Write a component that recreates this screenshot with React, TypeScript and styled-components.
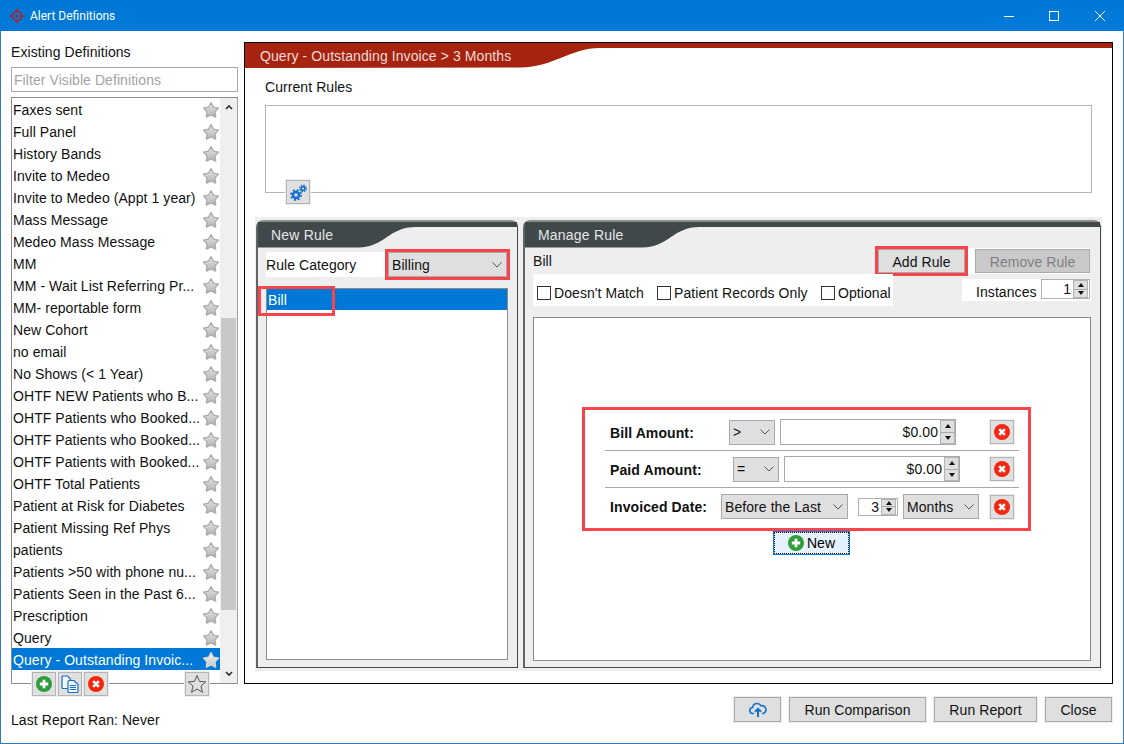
import React, { useId } from 'react'
import styled, { createGlobalStyle } from 'styled-components'

const definitions = [
  'Faxes sent',
  'Full Panel',
  'History Bands',
  'Invite to Medeo',
  'Invite to Medeo (Appt 1 year)',
  'Mass Message',
  'Medeo Mass Message',
  'MM',
  'MM - Wait List Referring Pr...',
  'MM- reportable form',
  'New Cohort',
  'no email',
  'No Shows (< 1 Year)',
  'OHTF NEW Patients who B...',
  'OHTF Patients who Booked...',
  'OHTF Patients who Booked...',
  'OHTF Patients with Booked...',
  'OHTF Total Patients',
  'Patient at Risk for Diabetes',
  'Patient Missing Ref Phys',
  'patients',
  'Patients >50 with phone nu...',
  'Patients Seen in the Past 6...',
  'Prescription',
  'Query',
  'Query - Outstanding Invoic...',
]

const GlobalStyle = createGlobalStyle`
  * { box-sizing: border-box; }
  html, body { margin: 0; padding: 0; overflow: hidden; background: #fff; }
  body { font-family: "Liberation Sans", Arial, sans-serif; font-size: 14px; color: #111; letter-spacing: 0.07px; }
`

const Window = styled.div`
  width: 1124px;
  height: 744px;
  display: flex;
  flex-direction: column;
  border: 1px solid #2b7cc4;
  border-top: 0;
  background: #fff;
`

const TitleBar = styled.header`
  height: 31px;
  margin: 0 -1px;
  flex: none;
  display: flex;
  align-items: center;
  padding-left: 9px;
  background: #0078d7;
  color: #fff;
  font-family: Roboto, sans-serif;
  font-size: 12px;
  letter-spacing: 0;
`

const TitleText = styled.span`
  margin-left: 5px;
  flex: 1;
`

const WinButton = styled.span<{ $w: number }>`
  width: ${p => p.$w}px;
  height: 31px;
  display: flex;
  align-items: center;
  justify-content: center;
`

const Content = styled.div`
  flex: 1;
  display: flex;
  gap: 6px;
  padding: 11px 0 0 10px;
`

const LeftColumn = styled.aside`
  width: 227px;
  display: flex;
  flex-direction: column;
`

const Heading = styled.div`
  margin-top: 2px;
  line-height: 16px;
`

const FilterInput = styled.input`
  margin-top: 7px;
  height: 25px;
  width: 100%;
  border: 1px solid #a9a9a9;
  padding: 0 2px;
  font: inherit;
  letter-spacing: inherit;
  outline: none;
  &::placeholder { color: #a3a3a3; opacity: 1; }
`

const ListBox = styled.div`
  margin-top: 5px;
  height: 587px;
  display: flex;
  border: 1px solid #8c8c8c;
  border-right-color: #a0a0a0;
`

const DefinitionList = styled.ul`
  flex: 1;
  margin: 0;
  padding: 0;
  list-style: none;
`

const DefinitionRow = styled.li<{ $selected?: boolean }>`
  height: 22px;
  display: flex;
  align-items: center;
  justify-content: space-between;
  padding: 2px 0 0 1px;
  white-space: nowrap;
  background: ${p => (p.$selected ? '#0078d7' : 'transparent')};
  color: ${p => (p.$selected ? '#fff' : '#111')};
`

const StarSlot = styled.span`
  width: 18px;
  height: 18px;
  display: flex;
`

const ScrollBar = styled.div`
  width: 17px;
  display: flex;
  flex-direction: column;
  align-items: center;
  background: #efefef;
`

const ScrollArrow = styled.span<{ $bottom?: boolean }>`
  height: 18px;
  display: flex;
  align-items: center;
  margin-top: ${p => (p.$bottom ? 'auto' : '0')};
`

const ScrollThumb = styled.div`
  width: 15px;
  height: 292px;
  margin-top: 202px;
  background: #c8c8c8;
`

const ListTools = styled.div`
  position: relative;
  margin-top: -12px;
  padding: 0 29px 0 21px;
  display: flex;
  gap: 2px;
`

const IconButton = styled.button<{ $push?: boolean }>`
  width: 24px;
  height: 24px;
  padding: 0;
  display: flex;
  align-items: center;
  justify-content: center;
  background: #e0e0e0;
  border: 1px solid #b4b4b4;
  box-shadow: 0 0 0 1px #eee;
  margin-left: ${p => (p.$push ? 'auto' : '0')};
`

const LastReport = styled.div`
  margin-top: 16px;
  line-height: 16px;
`

const RightColumn = styled.div`
  width: 869px;
  display: flex;
  flex-direction: column;
`

const MainPanel = styled.main`
  height: 642px;
  border: 1px solid #000;
`

const Banner = styled.div`
  position: relative;
  height: 25px;
  padding: 5px 0 0 15px;
  line-height: 16px;
  color: #f0dcd7;
  letter-spacing: 0.09px;
`

const ShapeBack = styled.svg`
  position: absolute;
  left: 0;
  top: 0;
`

const BannerText = styled.span`
  position: relative;
`

const CurrentLabel = styled.div`
  margin: 11px 0 0 20px;
  line-height: 16px;
`

const RulesBox = styled.div`
  position: relative;
  margin: 10px 0 0 20px;
  width: 827px;
  height: 88px;
  border: 1px solid #b4b4b4;
`

const GearButton = styled(IconButton)`
  position: absolute;
  left: 20px;
  bottom: -12px;
`

const PanelsArea = styled.div`
  margin: 24px 0 0 10px;
  width: 847px;
  height: 454px;
  padding: 3px 0 0 1px;
  display: flex;
  gap: 5px;
  background: #eee;
`

const RulePanel = styled.section<{ $w: number }>`
  width: ${p => p.$w}px;
  height: 448px;
  background: #eee;
  border-style: solid;
  border-width: 2px 1px 1px 2px;
  border-color: #8e8e8e #41484a #41484a #5f6567;
  border-radius: 7px 7px 0 0;
`

const PanelHeader = styled.div`
  position: relative;
  height: 26px;
  padding: 5px 0 0 13px;
  line-height: 16px;
  color: #e4e7e7;
  letter-spacing: 0.2px;
`

const RuleCategoryRow = styled.div`
  margin: 4px 0 0 8px;
  width: 243px;
  height: 25px;
  display: flex;
  align-items: center;
  background: #fff;
`

const Dropdown = styled.div<{ $w: number; $marked?: boolean }>`
  width: ${p => p.$w}px;
  height: 25px;
  flex: none;
  display: flex;
  align-items: center;
  justify-content: space-between;
  padding: 0 4px 0 3px;
  background: #dfdfdf;
  border: 1px solid #a9a9a9;
  ${p => p.$marked && 'outline: 3px solid #f8444a; margin: 0 2px 0 auto;'}
`

const RuleTypeList = styled.div`
  margin: 11px 0 0 8px;
  width: 242px;
  height: 372px;
  background: #fff;
  border: 1px solid #8c8c8c;
`

const RuleTypeRow = styled.div`
  position: relative;
  height: 21px;
  padding: 2px 0 0 1px;
  line-height: 18px;
  background: #0078d7;
  color: #fff;
  &::after {
    content: '';
    box-sizing: border-box;
    position: absolute;
    left: -9px;
    top: -3px;
    width: 77px;
    height: 30px;
    border: 3px solid #f8444a;
  }
`

const ManageTop = styled.div`
  height: 26px;
  display: flex;
  align-items: center;
  padding: 0 10px 0 8px;
`

const ManageButtons = styled.div`
  margin-left: auto;
  display: flex;
  gap: 10px;
  height: 26px;
  padding: 1px 0;
  background: #fff;
`

const ActionButton = styled.button<{ $w: number; $marked?: boolean; $off?: boolean }>`
  width: ${p => p.$w}px;
  height: 24px;
  padding: 1px 0 0;
  flex: none;
  font: inherit;
  letter-spacing: inherit;
  background: ${p => (p.$off ? '#c9c9c9' : '#dfdfdf')};
  color: ${p => (p.$off ? '#7f7f7f' : '#111')};
  border: 1px solid #aaa;
  ${p => p.$marked && 'outline: 3px solid #f8444a;'}
`

const OptionsBar = styled.div`
  height: 32px;
  display: flex;
  justify-content: space-between;
  padding: 0 9px 0 8px;
`

const Options = styled.div`
  width: 360px;
  display: flex;
  align-items: center;
  padding: 6px 0 0 4px;
  background: #fff;
`

const Option = styled.label<{ $w: number }>`
  width: ${p => p.$w}px;
  display: flex;
  align-items: center;
  gap: 3px;
  white-space: nowrap;
`

const CheckMark = styled.span`
  width: 14px;
  height: 14px;
  flex: none;
  background: #fff;
  border: 1px solid #333;
`

const Instances = styled.div`
  width: 129px;
  height: 22px;
  margin-top: 5px;
  display: flex;
  justify-content: space-between;
  padding: 0 1px 0 14px;
  line-height: 26px;
  background: #fff;
`

const RuleCanvas = styled.div`
  margin: 11px 0 0 8px;
  width: 558px;
  height: 344px;
  padding: 89px 0 0 48px;
  background: #fff;
  border: 1px solid #8a8a8a;
`

const ConditionBox = styled.div`
  width: 449px;
  height: 124px;
  border: 3px solid #f8444a;
  padding: 0 9px 0 20px;
`

const ConditionRow = styled.div<{ $h: number; $pt?: number; $pb?: number; $last?: boolean }>`
  height: ${p => p.$h}px;
  padding: ${p => p.$pt ?? 0}px 5px ${p => p.$pb ?? 0}px;
  display: flex;
  align-items: center;
  gap: 5px;
  border-bottom: ${p => (p.$last ? '0' : '1px solid #a9a9a9')};
`

const ConditionLabel = styled.span<{ $w: number; $nudge?: boolean }>`
  width: ${p => p.$w}px;
  padding-top: ${p => (p.$nudge ? '2px' : '0')};
  font-weight: bold;
  white-space: nowrap;
  letter-spacing: 0.1px;
`

const AmountField = styled.div`
  width: 176px;
  height: 26px;
  display: flex;
  align-items: center;
  justify-content: flex-end;
  gap: 2px;
  border: 1px solid #a9a9a9;
`

const NumberField = styled.div<{ $w: number; $h: number; $ml?: number }>`
  width: ${p => p.$w}px;
  height: ${p => p.$h}px;
  margin-left: ${p => p.$ml ?? 0}px;
  flex: none;
  display: flex;
  align-items: center;
  justify-content: flex-end;
  gap: 2px;
  padding-right: 1px;
  line-height: 16px;
  background: #fff;
  border: 1px solid #b0b0b0;
`

const Spin = styled.span<{ $h: number }>`
  width: 15px;
  height: ${p => p.$h}px;
  display: flex;
  flex-direction: column;
  flex: none;
  background: #dfdfdf;
  border: 1px solid #b4b4b4;
`

const SpinCell = styled.span<{ $down?: boolean }>`
  flex: 1;
  display: flex;
  align-items: center;
  justify-content: center;
  border-top: ${p => (p.$down ? '1px solid #a9a9a9' : '0')};
  &::before {
    content: '';
    border-left: 3px solid transparent;
    border-right: 3px solid transparent;
    ${p => (p.$down ? 'border-top: 4px solid #111;' : 'border-bottom: 4px solid #111;')}
  }
`

const RemoveButton = styled(IconButton)`
  margin-left: auto;
`

const NewButton = styled.button`
  margin-left: 191px;
  width: 77px;
  height: 24px;
  padding: 0;
  display: flex;
  align-items: center;
  justify-content: center;
  gap: 3px;
  font: inherit;
  background: #e5f1fb;
  border: 1px solid #0078d7;
  outline: 1px dotted #111;
  outline-offset: -2px;
`

const Footer = styled.footer`
  margin-top: 13px;
  display: flex;
  justify-content: flex-end;
  gap: 8px;
  padding-right: 1px;
`

const FooterButton = styled.button<{ $w: number }>`
  width: ${p => p.$w}px;
  height: 25px;
  padding: 0;
  display: flex;
  align-items: center;
  justify-content: center;
  font: inherit;
  letter-spacing: inherit;
  color: #111;
  background: #dfdfdf;
  border: 1px solid #a9a9a9;
  box-shadow: 0 0 0 1px #eee;
`

function Star({ bright, size = 18 }: { bright?: boolean; size?: number }) {
  const id = useId()
  return (
    <svg width={size} height={size} viewBox="0 0 18 18">
      <defs>
        <linearGradient id={id} x1="0" y1="0" x2="0" y2="1">
          <stop offset="0" stopColor={bright ? '#f4f4f4' : '#e6e6e6'} />
          <stop offset="1" stopColor={bright ? '#c4c4c4' : '#b4b4b4'} />
        </linearGradient>
      </defs>
      <polygon
        points="9,1.6 11.47,6.2 16.6,7.13 13,10.9 13.7,16.07 9,13.8 4.3,16.07 5,10.9 1.4,7.13 6.53,6.2"
        fill={`url(#${id})`}
        stroke={bright ? '#d8d8d8' : '#ababab'}
        strokeWidth="1.300"
        strokeLinejoin="round"
      />
    </svg>
  )
}

function OutlineStar() {
  return (
    <svg width="20" height="20" viewBox="0 0 20 20">
      <polygon
        points="10,1.5 12.5,7.4 18.8,7.9 14,12 15.5,18.3 10,15 4.5,18.3 6,12 1.2,7.9 7.5,7.4"
        fill="none"
        stroke="#555"
        strokeWidth="1"
        strokeLinejoin="round"
      />
    </svg>
  )
}

function AddIcon({ size = 16 }: { size?: number }) {
  return (
    <svg width={size} height={size} viewBox="0 0 16 16">
      <circle cx="8" cy="8" r="8" fill="#2f9e38" />
      <path d="M8 3.800v8.400M3.800 8h8.400" stroke="#fff" strokeWidth="2.800" />
    </svg>
  )
}

function DeleteIcon() {
  return (
    <svg width="16" height="16" viewBox="0 0 16 16">
      <circle cx="8" cy="8" r="8" fill="#f5260f" />
      <path d="M5.200 5.200l5.600 5.600M10.800 5.200l-5.600 5.600" stroke="#fff" strokeWidth="2.600" />
    </svg>
  )
}

function CopyIcon() {
  return (
    <svg width="18" height="18" viewBox="0 0 18 18" fill="#f2f7fd" stroke="#1470c8" strokeWidth="1.200">
      <path d="M2 1h4.500l3 3v9.500H2a1 1 0 0 1-1-1V2a1 1 0 0 1 1-1z" />
      <path d="M8 5.500h5l4 4v7a1 1 0 0 1-1 1H8a1 1 0 0 1-1-1v-10a1 1 0 0 1 1-1z" />
      <path d="M9 10.500h6M9 12.500h6M9 14.500h6" fill="none" />
    </svg>
  )
}

function GearsIcon() {
  return (
    <svg width="17" height="17" viewBox="0 0 17 17" fill="none" stroke="#1470c8">
      <circle cx="6" cy="11" r="3" strokeWidth="2.400" />
      <circle cx="6" cy="11" r="5" strokeWidth="1.800" strokeDasharray="2 1.930" />
      <circle cx="13" cy="4.500" r="1.900" strokeWidth="1.700" />
      <circle cx="13" cy="4.500" r="3.300" strokeWidth="1.300" strokeDasharray="1.500 1.090" />
    </svg>
  )
}

function CloudIcon() {
  return (
    <svg width="18" height="16" viewBox="0 0 18 16" fill="none" stroke="#1470c8" strokeWidth="1.600">
      <path d="M5 11.500H4a3 3 0 0 1-.4-6A4.500 4.500 0 0 1 12 3.800a3.900 3.900 0 0 1 2 7.700h-1" />
      <path d="M9 15V7.500M6 9.800l3-3 3 3" strokeWidth="2" />
    </svg>
  )
}

function Chevron() {
  return (
    <svg width="10" height="6" viewBox="0 0 10 6" fill="none" stroke="#555" strokeWidth="1">
      <path d="M0.500 0.500L5 5l4.500-4.500" />
    </svg>
  )
}

function ScrollChevron({ up }: { up?: boolean }) {
  return (
    <svg width="8" height="6" viewBox="0 0 8 6" fill="none" stroke="#333" strokeWidth="1.700">
      <path d={up ? 'M1 5l3-3 3 3' : 'M1 1l3 3 3-3'} />
    </svg>
  )
}

function AppLogo() {
  return (
    <svg width="16" height="16" viewBox="0 0 16 16">
      <circle cx="8" cy="8" r="4.600" fill="none" stroke="#b5202b" strokeWidth="1.700" />
      <circle cx="8" cy="8" r="1.600" fill="#b5202b" />
      <path d="M8 0l1.800 3.800H6.200zM8 16l-1.800-3.800h3.600zM0 8l3.800-1.800v3.600zM16 8l-3.800 1.800V6.200z" fill="#b5202b" />
    </svg>
  )
}

function WindowGlyph({ kind }: { kind: 'min' | 'max' | 'close' }) {
  return (
    <svg width="10" height="10" viewBox="0 0 10 10" fill="none" stroke="#fff" strokeWidth="1">
      {kind === 'min' && <path d="M0 5.500h10" />}
      {kind === 'max' && <rect x="0.500" y="0.500" width="9" height="9" />}
      {kind === 'close' && <path d="M0 0l10 10M10 0L0 10" />}
    </svg>
  )
}

function Spinner({ h }: { h: number }) {
  return (
    <Spin $h={h}>
      <SpinCell />
      <SpinCell $down />
    </Spin>
  )
}

function BannerShape() {
  return (
    <ShapeBack width="867" height="25" viewBox="0 0 867 25">
      <path d="M0 0H867V5H355C325 5 310 24 275 24.500L0 25z" fill="#a5230f" />
    </ShapeBack>
  )
}

function TabShape({ width, end }: { width: number; end: number }) {
  return (
    <ShapeBack width={width} height="26" viewBox={`0 0 ${width} 26`}>
      <path d={`M0 0H${width}V5H${end + 46}C${end + 18} 5 ${end + 16} 25 ${end - 12} 25.500H0z`} fill="#41484a" />
    </ShapeBack>
  )
}

function Condition({
  label,
  labelWidth,
  op,
  opWidth,
  h,
  pt,
}: {
  label: string
  labelWidth: number
  op: string
  opWidth: number
  h: number
  pt?: number
}) {
  return (
    <ConditionRow $h={h} $pt={pt}>
      <ConditionLabel $w={labelWidth} $nudge>{label}</ConditionLabel>
      <Dropdown $w={opWidth}>
        {op}
        <Chevron />
      </Dropdown>
      <AmountField>
        $0.00
        <Spinner h={24} />
      </AmountField>
      <RemoveButton>
        <DeleteIcon />
      </RemoveButton>
    </ConditionRow>
  )
}

export default function App() {
  return (
    <Window>
      <GlobalStyle />
      <TitleBar>
        <AppLogo />
        <TitleText>Alert Definitions</TitleText>
        <WinButton $w={46}><WindowGlyph kind="min" /></WinButton>
        <WinButton $w={44}><WindowGlyph kind="max" /></WinButton>
        <WinButton $w={48}><WindowGlyph kind="close" /></WinButton>
      </TitleBar>
      <Content>
        <LeftColumn>
          <Heading>Existing Definitions</Heading>
          <FilterInput placeholder="Filter Visible Definitions" />
          <ListBox>
            <DefinitionList>
              {definitions.map((name, i) => {
                const selected = i === definitions.length - 1
                return (
                  <DefinitionRow key={i} $selected={selected}>
                    {name}
                    <StarSlot><Star bright={selected} /></StarSlot>
                  </DefinitionRow>
                )
              })}
            </DefinitionList>
            <ScrollBar>
              <ScrollArrow><ScrollChevron up /></ScrollArrow>
              <ScrollThumb />
              <ScrollArrow $bottom><ScrollChevron /></ScrollArrow>
            </ScrollBar>
          </ListBox>
          <ListTools>
            <IconButton><AddIcon /></IconButton>
            <IconButton><CopyIcon /></IconButton>
            <IconButton><DeleteIcon /></IconButton>
            <IconButton $push><OutlineStar /></IconButton>
          </ListTools>
          <LastReport>Last Report Ran: Never</LastReport>
        </LeftColumn>

        <RightColumn>
          <MainPanel>
            <Banner>
              <BannerShape />
              <BannerText>Query - Outstanding Invoice &gt; 3 Months</BannerText>
            </Banner>
            <CurrentLabel>Current Rules</CurrentLabel>
            <RulesBox>
              <GearButton><GearsIcon /></GearButton>
            </RulesBox>
            <PanelsArea>
              <RulePanel $w={262}>
                <PanelHeader>
                  <TabShape width={259} end={112} />
                  <BannerText>New Rule</BannerText>
                </PanelHeader>
                <RuleCategoryRow>
                  Rule Category
                  <Dropdown $w={119} $marked>
                    Billing
                    <Chevron />
                  </Dropdown>
                </RuleCategoryRow>
                <RuleTypeList>
                  <RuleTypeRow>Bill</RuleTypeRow>
                </RuleTypeList>
              </RulePanel>

              <RulePanel $w={578}>
                <PanelHeader>
                  <TabShape width={575} end={129} />
                  <BannerText>Manage Rule</BannerText>
                </PanelHeader>
                <ManageTop>
                  Bill
                  <ManageButtons>
                    <ActionButton $w={87} $marked>Add Rule</ActionButton>
                    <ActionButton $w={115} $off>Remove Rule</ActionButton>
                  </ManageButtons>
                </ManageTop>
                <OptionsBar>
                  <Options>
                    <Option $w={120}><CheckMark />Doesn&apos;t Match</Option>
                    <Option $w={164}><CheckMark />Patient Records Only</Option>
                    <Option $w={72}><CheckMark />Optional</Option>
                  </Options>
                  <Instances>
                    Instances
                    <NumberField $w={49} $h={20}>
                      1
                      <Spinner h={18} />
                    </NumberField>
                  </Instances>
                </OptionsBar>
                <RuleCanvas>
                  <ConditionBox>
                    <Condition label="Bill Amount:" labelWidth={114} op=">" opWidth={46} h={41} pt={4} />
                    <Condition label="Paid Amount:" labelWidth={118} op="=" opWidth={46} h={37} />
                    <ConditionRow $h={40} $pb={3} $last>
                      <ConditionLabel $w={106}>Invoiced Date:</ConditionLabel>
                      <Dropdown $w={127}>
                        Before the Last
                        <Chevron />
                      </Dropdown>
                      <NumberField $w={40} $h={18} $ml={5}>
                        3
                        <Spinner h={16} />
                      </NumberField>
                      <Dropdown $w={76}>
                        Months
                        <Chevron />
                      </Dropdown>
                      <RemoveButton>
                        <DeleteIcon />
                      </RemoveButton>
                    </ConditionRow>
                  </ConditionBox>
                  <NewButton>
                    <AddIcon />
                    New
                  </NewButton>
                </RuleCanvas>
              </RulePanel>
            </PanelsArea>
          </MainPanel>
          <Footer>
            <FooterButton $w={47}><CloudIcon /></FooterButton>
            <FooterButton $w={137}>Run Comparison</FooterButton>
            <FooterButton $w={103}>Run Report</FooterButton>
            <FooterButton $w={67}>Close</FooterButton>
          </Footer>
        </RightColumn>
      </Content>
    </Window>
  )
}
